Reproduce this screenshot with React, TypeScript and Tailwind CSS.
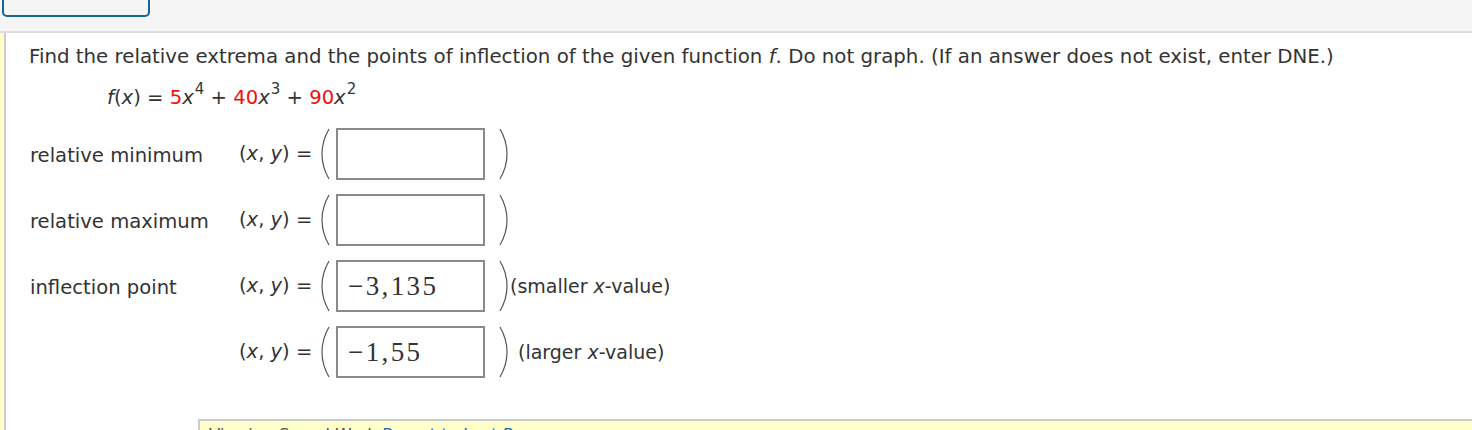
import React from "react";

const font = { fontFamily: '"DejaVu Sans", Verdana, sans-serif' };

function Paren({ right = false }: { right?: boolean }) {
  return (
    <svg width="10" height="54" viewBox="0 0 10 54" className="shrink-0">
      <path
        d={right ? "M2 2 Q9 14 9 27 Q9 40 2 52" : "M8 2 Q1 14 1 27 Q1 40 8 52"}
        fill="none"
        stroke="#555"
        strokeWidth="1.2"
      />
    </svg>
  );
}

function XY() {
  return (
    <span className="w-[82px] text-[19.5px] text-[#333] whitespace-nowrap">
      (<i>x</i>, <i>y</i>) =
    </span>
  );
}

function Answer({ value, note }: { value?: string; note?: React.ReactNode }) {
  return (
    <div className="flex items-center">
      <XY />
      <Paren />
      <div className="ml-[5px] w-[149px] h-[52px] border-2 border-[#8a8a8a] bg-white flex items-center pl-[10px]">
        {value && (
          <span
            className="text-[27px] text-[#333] tracking-[2.4px]"
            style={{ fontFamily: '"Liberation Serif", "Times New Roman", serif' }}
          >
            {value}
          </span>
        )}
      </div>
      <div className="ml-[13px]">
        <Paren right />
      </div>
      {note}
    </div>
  );
}

export default function App() {
  return (
    <div className="w-[1472px] h-[430px] overflow-hidden bg-white text-[#333]" style={font}>
      <div className="h-[33px] bg-[#f5f5f5] border-b-2 border-[#dddddd] relative">
        <div className="absolute left-[2px] top-[-6px] w-[148px] h-[23px] border-2 border-[#176698] rounded-[5px]" />
      </div>
      <div className="flex h-[400px]">
        <div className="w-[4px] bg-[#ffffcc]" />
        <div className="w-[2px] bg-[#cccccc]" />
        <div className="flex-1 pl-[23px] text-[19.6px]">
          <p className="mt-[10px] leading-[28px] whitespace-nowrap text-[19.8px]">
            Find the relative extrema and the points of inflection of the given function <i>f</i>. Do not graph. (If an answer does not exist, enter DNE.)
          </p>
          <div className="mt-[13px] ml-[78px] leading-[28px] text-[19.6px]">
            <i>f</i>(<i>x</i>) = <span className="text-[#ee1111]">5</span><i>x</i>
            <sup className="text-[15px] top-[-10px] ml-[1px]">4</sup> + <span className="text-[#ee1111]">40</span><i>x</i>
            <sup className="text-[15px] top-[-10px] ml-[1px]">3</sup> + <span className="text-[#ee1111]">90</span><i>x</i>
            <sup className="text-[15px] top-[-10px] ml-[1px]">2</sup>
          </div>
          <div className="mt-[16px] flex flex-col gap-[14px]">
            <div className="flex items-center h-[52px]">
              <span className="w-[210px] pl-[1px] pt-[4px]">relative minimum</span>
              <Answer />
            </div>
            <div className="flex items-center h-[52px]">
              <span className="w-[210px] pl-[1px] pt-[4px]">relative maximum</span>
              <Answer />
            </div>
            <div className="flex items-center h-[52px]">
              <span className="w-[210px] pl-[1px] pt-[4px]">inflection point</span>
              <Answer
                value="−3,135"
                note={<span className="ml-[2px] text-[19px]">(smaller <i>x</i>-value)</span>}
              />
            </div>
            <div className="flex items-center h-[52px]">
              <span className="w-[210px]" />
              <Answer
                value="−1,55"
                note={<span className="ml-[10px] text-[19px]">(larger <i>x</i>-value)</span>}
              />
            </div>
          </div>
          <div className="mt-[41px] ml-[169px] border-t-2 border-l-2 border-[#cccccc] bg-[#ffffcc] h-[40px] pl-[9px] pt-[2px] leading-[24px] text-[16.5px]">
            <span className="text-[#555]">Viewing Saved Work </span>
            <span className="text-[#1a6bb0]">Revert to Last Response</span>
          </div>
        </div>
      </div>
    </div>
  );
}
